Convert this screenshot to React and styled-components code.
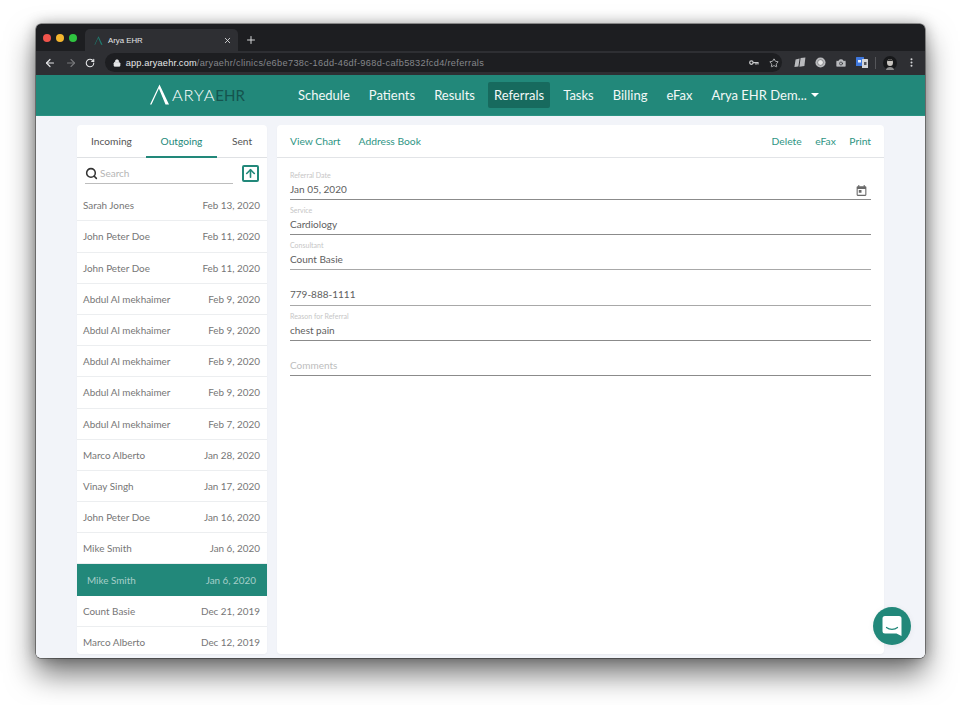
import React from 'react';
import styled, { createGlobalStyle } from 'styled-components';
import { Search, ArrowUp, ArrowLeft, ArrowRight, RotateCw, Lock, Star, X, Plus, MoreVertical, Camera } from 'lucide-react';

const GlobalStyle = createGlobalStyle`
    html, body {
        margin: 0;
        padding: 0;
        background: #fff;
        overflow: hidden;
    }
    * {
        box-sizing: border-box;
    }
`;

const teal = '#22887a';

const Page = styled.div`
    width: 960px;
    height: 705px;
    padding: 24px 35px 47px 36px;
    font-family: Lato, 'Open Sans', sans-serif;
`;

const Window = styled.div`
    position: relative;
    height: 634px;
    display: flex;
    flex-direction: column;
    border-radius: 5px;
    overflow: hidden;
    background: #f2f4f9;
`;

const WindowShadow = styled.div`
    height: 634px;
    border-radius: 5px;
    box-shadow: 0 16px 30px rgba(0, 0, 0, 0.55), 0 0 14px rgba(0, 0, 0, 0.3), 0 0 0 0.5px #555;
`;

const TabStrip = styled.div`
    height: 27px;
    flex: none;
    display: flex;
    align-items: flex-end;
    background: #1d1e21;
    padding-left: 7px;
`;

const Lights = styled.div`
    display: flex;
    gap: 5px;
    align-self: flex-start;
    margin-top: 10px;
    width: 42px;
`;

const Light = styled.span`
    width: 8px;
    height: 8px;
    border-radius: 50%;
    background: ${props => props.color};
`;

const Tab = styled.div`
    width: 153px;
    height: 22px;
    display: flex;
    align-items: center;
    padding: 0 6px 0 9px;
    background: #2e2f33;
    border-radius: 5px 5px 0 0;
    color: #e4e5e7;
    font-family: 'Liberation Sans', Arial, sans-serif;
    font-size: 7.8px;
`;

const TabTitle = styled.span`
    flex: 1;
    margin-left: 5px;
`;

const NewTab = styled.div`
    display: flex;
    align-items: center;
    height: 22px;
    margin-left: 7px;
    color: #d5d6d8;
`;

const Toolbar = styled.div`
    height: 23.5px;
    flex: none;
    display: flex;
    align-items: center;
    padding: 0 8px;
    background: #2e2f33;
    color: #e4e5e7;
`;

const NavIcons = styled.div`
    display: flex;
    align-items: center;
    gap: 8.5px;
    width: 61px;
`;

const UrlBar = styled.div`
    width: 680px;
    height: 19px;
    display: flex;
    align-items: center;
    padding: 0 3px 0 8px;
    border-radius: 10px;
    background: #1d1e21;
    font-family: 'Liberation Sans', Arial, sans-serif;
    font-size: 9.2px;
    white-space: nowrap;
`;

const Host = styled.span`
    color: #e8e9ea;
    margin-left: 5px;
    letter-spacing: 0.17px;
`;

const UrlPath = styled.span`
    color: #85878b;
    flex: 1;
    letter-spacing: 0.33px;
`;

const UrlIcons = styled.div`
    display: flex;
    align-items: center;
    gap: 10px;
    color: #c9cacc;
`;

const Extensions = styled.div`
    display: flex;
    align-items: center;
    gap: 9px;
    margin-left: 12px;
    color: #b9babd;
`;

const Divider = styled.span`
    width: 1px;
    height: 12px;
    margin: 0 -2px;
    background: #55565a;
`;

const Header = styled.div`
    height: 41px;
    flex: none;
    display: flex;
    align-items: center;
    padding-left: 113px;
    background: ${teal};
    border-bottom: 1px solid #2a9383;
`;

const Logo = styled.div`
    width: 143px;
    display: flex;
    align-items: center;
    font-size: 16.5px;
    letter-spacing: 0.8px;
    font-weight: 300;
    color: #fff;
`;

const LogoWord = styled.span`
    margin-left: 2px;
`;

const LogoDark = styled.span`
    color: #15544e;
    font-size: 15px;
    letter-spacing: 0;
    font-weight: 400;
`;

const Menu = styled.nav`
    display: flex;
    align-items: center;
    gap: 7px;
`;

const MenuItem = styled.div`
    height: 26px;
    display: flex;
    align-items: center;
    gap: 4px;
    padding: 0 6px;
    border-radius: 2px;
    font-size: 13px;
    color: #f2f8f7;
    background: ${props => (props.active ? '#176a5e' : 'transparent')};
`;

const Caret = styled.span`
    width: 0;
    height: 0;
    border-left: 4px solid transparent;
    border-right: 4px solid transparent;
    border-top: 4px solid #fff;
`;

const Content = styled.div`
    flex: 1;
    min-height: 0;
    display: flex;
    gap: 10px;
    padding: 9.5px 41px 4px 41px;
`;

const Panel = styled.div`
    background: #fff;
    border-radius: 4px;
    overflow: hidden;
    box-shadow: 0 1px 2px rgba(0, 0, 0, 0.04);
`;

const ListPanel = styled(Panel)`
    width: 190px;
    flex: none;
`;

const DetailPanel = styled(Panel)`
    flex: 1;
`;

const Tabs = styled.div`
    height: 33px;
    display: flex;
    border-bottom: 1px solid #dfe1e4;
`;

const ListTab = styled.div`
    width: ${props => props.width}px;
    height: 33px;
    display: flex;
    align-items: center;
    justify-content: center;
    font-size: 10.2px;
    color: ${props => (props.active ? teal : '#555')};
    border-bottom: 2px solid ${props => (props.active ? teal : 'transparent')};
`;

const SearchRow = styled.div`
    height: 32.2px;
    display: flex;
    align-items: flex-start;
    padding: 6px 8px 0 8px;
`;

const SearchField = styled.div`
    width: 148px;
    height: 20px;
    padding-bottom: 1px;
    display: flex;
    align-items: center;
    gap: 2px;
    color: #333;
    border-bottom: 1px solid #bdbdbd;
`;

const SearchText = styled.span`
    font-size: 10px;
    color: #b5b5b5;
`;

const UploadButton = styled.div`
    width: 17px;
    height: 17px;
    margin-left: auto;
    margin-top: 1px;
    display: flex;
    align-items: center;
    justify-content: center;
    color: ${teal};
    border: 2px solid ${teal};
    border-radius: 2px;
`;

const Row = styled.div`
    height: 31.2px;
    display: flex;
    align-items: center;
    justify-content: space-between;
    padding: ${props => (props.selected ? '0 11px 0 10px' : '0 7px 0 6px')};
    font-size: 9.9px;
    color: ${props => (props.selected ? 'rgba(255, 255, 255, 0.6)' : '#767676')};
    background: ${props => (props.selected ? teal : '#fff')};
    border-bottom: 1px solid ${props => (props.selected ? teal : '#eceef0')};
`;

const DetailBar = styled.div`
    height: 33px;
    display: flex;
    align-items: center;
    justify-content: space-between;
    padding: 0 13px;
    border-bottom: 1px solid #e2e4e7;
`;

const LinkGroup = styled.div`
    display: flex;
    gap: ${props => props.gap}px;
`;

const LinkText = styled.span`
    font-size: 10.3px;
    color: #2f9584;
`;

const Form = styled.div`
    padding: 6.8px 13px 0 13px;
`;

const Field = styled.div`
    position: relative;
    height: 35.2px;
    padding-top: 5px;
    border-bottom: 1px solid ${props => props.line || '#8b8b8b'};
`;

const FieldLabel = styled.div`
    height: 12px;
    line-height: 11px;
    font-size: 7px;
    color: #c6c6c6;
`;

const FieldValue = styled.div`
    height: 14px;
    line-height: 14px;
    font-size: 10px;
    color: ${props => (props.placeholder ? '#bdbdbd' : '#606060')};
`;

const FieldIcon = styled.svg`
    position: absolute;
    right: 3px;
    bottom: 2px;
`;

const ChatBubble = styled.div`
    position: absolute;
    left: 837px;
    top: 583px;
    width: 38px;
    height: 38px;
    display: flex;
    align-items: center;
    justify-content: center;
    border-radius: 50%;
    background: ${teal};
    box-shadow: 0 1px 6px rgba(0, 0, 0, 0.06);
`;

const rows = [
    ['Sarah Jones', 'Feb 13, 2020'],
    ['John Peter Doe', 'Feb 11, 2020'],
    ['John Peter Doe', 'Feb 11, 2020'],
    ['Abdul Al mekhaimer', 'Feb 9, 2020'],
    ['Abdul Al mekhaimer', 'Feb 9, 2020'],
    ['Abdul Al mekhaimer', 'Feb 9, 2020'],
    ['Abdul Al mekhaimer', 'Feb 9, 2020'],
    ['Abdul Al mekhaimer', 'Feb 7, 2020'],
    ['Marco Alberto', 'Jan 28, 2020'],
    ['Vinay Singh', 'Jan 17, 2020'],
    ['John Peter Doe', 'Jan 16, 2020'],
    ['Mike Smith', 'Jan 6, 2020'],
    ['Mike Smith', 'Jan 6, 2020', true],
    ['Count Basie', 'Dec 21, 2019'],
    ['Marco Alberto', 'Dec 12, 2019'],
];

const fields = [
    { label: 'Referral Date', value: 'Jan 05, 2020', date: true },
    { label: 'Service', value: 'Cardiology' },
    { label: 'Consultant', value: 'Count Basie', line: '#a8a8a8' },
    { label: '', value: '779-888-1111', line: '#a8a8a8' },
    { label: 'Reason for Referral', value: 'chest pain' },
    { label: '', value: 'Comments', placeholder: true },
];

const menu = [
    { name: 'Schedule' },
    { name: 'Patients' },
    { name: 'Results' },
    { name: 'Referrals', active: true },
    { name: 'Tasks' },
    { name: 'Billing' },
    { name: 'eFax' },
];

const Lambda = ({ size, color }) => (
    <svg width={size} height={size} viewBox="0 0 20 21" fill="none">
        <path d="M0.5 20.5 L10 0.5 L19.5 20.5 L16 20.5 L9.4 4.5 L2 20.5 Z" fill={color} />
    </svg>
);

const App = () => (
    <Page>
        <GlobalStyle />
        <WindowShadow>
            <Window>
                <TabStrip>
                    <Lights>
                        <Light color="#f0544c" />
                        <Light color="#f5b62e" />
                        <Light color="#2fc440" />
                    </Lights>
                    <Tab>
                        <Lambda size={9} color="#1f7c70" />
                        <TabTitle>Arya EHR</TabTitle>
                        <X size={9} strokeWidth={2.2} />
                    </Tab>
                    <NewTab>
                        <Plus size={12} strokeWidth={2} />
                    </NewTab>
                </TabStrip>
                <Toolbar>
                    <NavIcons>
                        <ArrowLeft size={12} strokeWidth={2.4} />
                        <ArrowRight size={12} strokeWidth={2.2} color="#77787b" />
                        <RotateCw size={10} strokeWidth={2.6} />
                    </NavIcons>
                    <UrlBar>
                        <Lock size={8} fill="#e4e5e7" strokeWidth={2} />
                        <Host>app.aryaehr.com</Host>
                        <UrlPath>/aryaehr/clinics/e6be738c-16dd-46df-968d-cafb5832fcd4/referrals</UrlPath>
                        <UrlIcons>
                            <svg width="10" height="6" viewBox="0 0 10 6">
                                <circle cx="2.4" cy="2.6" r="1.7" fill="none" stroke="#c9cacc" strokeWidth="1.2" />
                                <path d="M4 2.6 H9.6 M7 2.6 V4.8 M9 2.6 V4.4" fill="none" stroke="#c9cacc" strokeWidth="1.1" />
                            </svg>
                            <Star size={10} strokeWidth={2} />
                        </UrlIcons>
                    </UrlBar>
                    <Extensions>
                        <svg width="12" height="11" viewBox="0 0 12 11">
                            <path d="M1.6 2.4 L5.6 1.4 L4.4 9.6 L0.4 10 Z M6.6 1 L11.4 0.4 L10.4 9 L5.4 9.8 Z" fill="#b9babd" />
                        </svg>
                        <svg width="11" height="11" viewBox="0 0 10 10">
                            <circle cx="5" cy="5" r="4.6" fill="#b9babd" />
                            <circle cx="5" cy="5" r="2.6" fill="#e8e8e8" stroke="#55565a" strokeWidth="0.5" />
                        </svg>
                        <Camera size={12} fill="#b9babd" color="#2e2f33" strokeWidth={1.4} />
                        <svg width="12" height="11" viewBox="0 0 12 11">
                            <rect x="0" y="0" width="8" height="9" rx="0.5" fill="#3f78de" />
                            <rect x="6" y="2" width="6" height="9" rx="0.5" fill="#d5d6d8" />
                            <rect x="2" y="3" width="3" height="2.5" fill="#e8eefb" />
                            <rect x="8" y="5" width="2.5" height="3" fill="#55565a" />
                        </svg>
                        <Divider />
                        <svg width="14" height="14" viewBox="0 0 14 14">
                            <circle cx="7" cy="7" r="7" fill="#17181a" />
                            <ellipse cx="7" cy="6.5" rx="3" ry="3.6" fill="#c9c5c0" />
                            <path d="M3 14 C3 10 11 10 11 14 Z" fill="#8b8b8b" />
                            <path d="M4 5 C5 2.5 9 2.5 10 5 L4 5 Z" fill="#2b2b2b" />
                        </svg>
                        <MoreVertical size={11} strokeWidth={2.4} color="#d5d6d8" />
                    </Extensions>
                </Toolbar>
                <Header>
                    <Logo>
                        <Lambda size={21} color="#fff" />
                        <LogoWord>ARYA</LogoWord>
                        <LogoDark>EHR</LogoDark>
                    </Logo>
                    <Menu>
                        {menu.map(item => (
                            <MenuItem key={item.name} active={item.active}>
                                {item.name}
                            </MenuItem>
                        ))}
                        <MenuItem>
                            Arya EHR Dem...
                            <Caret />
                        </MenuItem>
                    </Menu>
                </Header>
                <Content>
                    <ListPanel>
                        <Tabs>
                            <ListTab width={69}>Incoming</ListTab>
                            <ListTab width={71} active>
                                Outgoing
                            </ListTab>
                            <ListTab width={50}>Sent</ListTab>
                        </Tabs>
                        <SearchRow>
                            <SearchField>
                                <Search size={13} strokeWidth={2.8} />
                                <SearchText>Search</SearchText>
                            </SearchField>
                            <UploadButton>
                                <ArrowUp size={13} strokeWidth={3} />
                            </UploadButton>
                        </SearchRow>
                        {rows.map(([name, date, selected], i) => (
                            <Row key={i} selected={selected}>
                                <span>{name}</span>
                                <span>{date}</span>
                            </Row>
                        ))}
                    </ListPanel>
                    <DetailPanel>
                        <DetailBar>
                            <LinkGroup gap={18}>
                                <LinkText>View Chart</LinkText>
                                <LinkText>Address Book</LinkText>
                            </LinkGroup>
                            <LinkGroup gap={13.5}>
                                <LinkText>Delete</LinkText>
                                <LinkText>eFax</LinkText>
                                <LinkText>Print</LinkText>
                            </LinkGroup>
                        </DetailBar>
                        <Form>
                            {fields.map((f, i) => (
                                <Field key={i} line={f.line}>
                                    <FieldLabel>{f.label}</FieldLabel>
                                    <FieldValue placeholder={f.placeholder}>{f.value}</FieldValue>
                                    {f.date && (
                                        <FieldIcon width="13" height="13" viewBox="0 0 24 24" fill="#6a6a6a">
                                            <path d="M19 4h-1V2h-2v2H8V2H6v2H5a2 2 0 0 0-2 2v14a2 2 0 0 0 2 2h14a2 2 0 0 0 2-2V6a2 2 0 0 0-2-2zm0 16H5V9h14v11zM7 11h5v5H7z" />
                                        </FieldIcon>
                                    )}
                                </Field>
                            ))}
                        </Form>
                    </DetailPanel>
                </Content>
                <ChatBubble>
                    <svg width="20" height="22" viewBox="0 0 20 22">
                        <path d="M3 1 H17 A2.5 2.5 0 0 1 19.5 3.5 V21 L14.5 18.5 H3 A2.5 2.5 0 0 1 0.5 16 V3.5 A2.5 2.5 0 0 1 3 1 Z" fill="#fff" />
                        <path d="M4.5 12.5 C7.5 15 12.5 15 15.5 12.5" fill="none" stroke={teal} strokeWidth="1.2" strokeLinecap="round" />
                    </svg>
                </ChatBubble>
            </Window>
        </WindowShadow>
    </Page>
);

export default App;
